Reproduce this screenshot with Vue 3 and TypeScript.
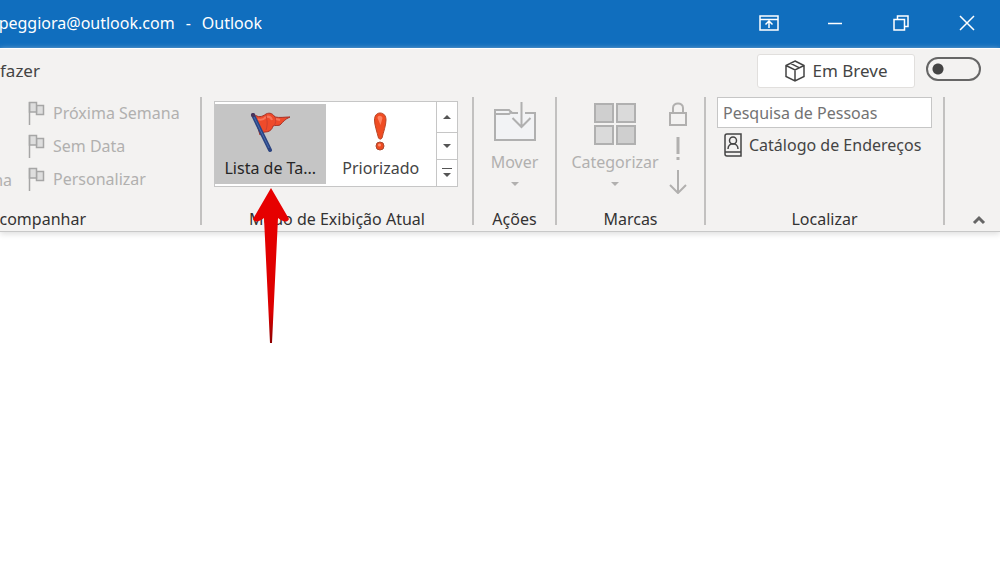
<script setup lang="ts">
import { ref } from 'vue'

interface FollowUp {
  label: string
}

const followUps: FollowUp[] = [
  { label: 'Próxima Semana' },
  { label: 'Sem Data' },
  { label: 'Personalizar' },
]

const people = ref<string>('')
const comingSoon = ref<boolean>(false)
const view = ref<'list' | 'priority'>('list')
</script>

<template>
  <div class="window">
    <header class="titlebar">
      <div class="title"><span>peggiora@outlook.com</span><span>-</span><span>Outlook</span></div>
      <div class="controls">
        <button type="button" aria-label="Opções da faixa">
          <svg width="20" height="16" viewBox="0 0 20 16"><path d="M1 1h18v14H1zM1 4.500h18M10 13V6.500M6.500 9.500L10 6l3.500 3.500" /></svg>
        </button>
        <button type="button" aria-label="Minimizar">
          <svg width="16" height="16" viewBox="0 0 16 16"><path d="M1 8.500h14" /></svg>
        </button>
        <button type="button" aria-label="Restaurar">
          <svg width="16" height="16" viewBox="0 0 16 16"><path d="M1 4.500h10.500V15H1zM4.500 4.500V1H15v10.500h-3.500" /></svg>
        </button>
        <button type="button" aria-label="Fechar">
          <svg width="16" height="16" viewBox="0 0 16 16"><path d="M1 1l14 14M15 1L1 15" /></svg>
        </button>
      </div>
    </header>

    <div class="ribbon">
      <div class="tabs">
        <span class="tell">fazer</span>
        <button type="button" class="soon">
          <svg width="20" height="22" viewBox="0 0 20 22"><path d="M10 1l9 4.500v11L10 21l-9-4.500v-11zM1 5.500l9 4.500 9-4.500M10 10v11M5.500 3.300l9 4.500" /></svg>
          Em Breve
        </button>
        <input v-model="comingSoon" type="checkbox" class="switch" aria-label="Em Breve" />
      </div>

      <div class="groups">
        <section class="group follow">
          <div class="body">
            <div class="cut"><span>na</span></div>
            <ul class="flags">
              <li v-for="f in followUps" :key="f.label">
                <button type="button" disabled>
                  <svg width="17" height="24" viewBox="0 0 17 24">
                    <path d="M8.500 4.500h7v9h-7z" />
                    <path d="M1.500 1.500h7v9.500h-7z" />
                    <path d="M1.500 1v23" />
                  </svg>
                  {{ f.label }}
                </button>
              </li>
            </ul>
          </div>
          <h2>companhar</h2>
        </section>

        <section class="group views">
          <div class="body">
            <div class="gallery">
              <button type="button" class="view" :class="{ on: view === 'list' }" @click="view = 'list'">
                <svg width="44" height="44" viewBox="0 0 44 44">
                  <path d="M6 4C10 8 14 7 18 4c4-2 7 0 9 3 5 1 9 0 15 0-5 2-7 5-10 8-3 1-5 0-7 1-1 4-4 6-8 6-2 0-3 2-5 3z" fill="#ef4b2b" stroke="#a83328" stroke-width="1" />
                  <path d="M10 9c3 2 6 0 8-2 3-1 5 0 6 3M28 9l4 1" fill="none" stroke="#f8745a" stroke-width="2" />
                  <path d="M18 5c1 5 2 9 0 15M27 7c1 3 1 6-1 9" fill="none" stroke="#cc4030" stroke-width="1" />
                  <path d="M5 5l17 35" stroke="#2c4480" stroke-width="4" stroke-linecap="round" />
                  <path d="M6 7l15 31" stroke="#466bb0" stroke-width="1" />
                  <circle cx="5" cy="5" r="2" fill="#4b3359" />
                </svg>
                <span>Lista de Ta...</span>
              </button>
              <button type="button" class="view" :class="{ on: view === 'priority' }" @click="view = 'priority'">
                <svg width="44" height="44" viewBox="0 0 44 44">
                  <path d="M21 3c4 0 6 3 6 7 0 5-2.500 12-4 18-1 1.500-2.500 1.500-3.500 0-1.500-6-4-13-4-18 0-4 2-7 5.500-7z" fill="#f04c22" stroke="#b84628" />
                  <path d="M18.500 8c0-3 4-3 5 0l-2 7z" fill="#ff8261" />
                  <circle cx="21" cy="36" r="4" fill="#ee4a20" stroke="#a94a32" />
                  <circle cx="20.500" cy="35" r="1.500" fill="#ff9270" />
                </svg>
                <span>Priorizado</span>
              </button>
              <div class="scroll">
                <button type="button" aria-label="Acima"><svg width="10" height="10" viewBox="0 0 10 10"><path d="M1 7l4-4 4 4z" /></svg></button>
                <button type="button" aria-label="Abaixo"><svg width="10" height="10" viewBox="0 0 10 10"><path d="M1 3l4 4 4-4z" /></svg></button>
                <button type="button" aria-label="Mais"><svg width="10" height="10" viewBox="0 0 10 10"><path d="M0 0h10v1H0zM1 5l4 4 4-4z" /></svg></button>
              </div>
            </div>
          </div>
          <h2>Modo de Exibição Atual</h2>
          <svg class="pointer" width="40" height="156" viewBox="0 0 40 156">
            <defs>
              <linearGradient id="tail" x1="0" y1="0" x2="0" y2="1">
                <stop offset="0" stop-color="#e80000" />
                <stop offset="0.800" stop-color="#dc0000" />
                <stop offset="1" stop-color="#8c0000" />
              </linearGradient>
            </defs>
            <path d="M20 0l18 31c-2 4-6 3-11-1l-6 125h-2L13 30c-5 4-9 5-11 1z" fill="url(#tail)" />
          </svg>
        </section>

        <section class="group actions">
          <div class="body">
            <button type="button" class="big" disabled>
              <svg width="42" height="46" viewBox="0 0 42 46">
                <path d="M1 9h14l3 3h23v27H1z" fill="#f2f3f5" />
                <path d="M1 13h14l3-2.500" fill="none" />
                <path d="M24 12h7" stroke="#f2f3f5" stroke-width="3" />
                <path d="M27.500 1v25M18.500 17l9 9 9-9" fill="none" />
              </svg>
              <span>Mover</span>
              <svg width="8" height="6" viewBox="0 0 8 6" class="caret"><path d="M0 1h8L4 5z" /></svg>
            </button>
          </div>
          <h2>Ações</h2>
        </section>

        <section class="group marks">
          <div class="body">
            <button type="button" class="big" disabled>
              <svg width="42" height="46" viewBox="0 0 42 46">
                <path d="M1 3h18v18H1zM23 25h18v18H23z" fill="#cfcfcf" />
                <path d="M23 3h18v18H23zM1 25h18v18H1z" fill="#dadada" />
              </svg>
              <span>Categorizar</span>
              <svg width="8" height="6" viewBox="0 0 8 6" class="caret"><path d="M0 1h8L4 5z" /></svg>
            </button>
            <div class="tools">
              <button type="button" disabled aria-label="Particular"><svg width="18" height="24" viewBox="0 0 18 24"><path d="M1 11h16v12H1zM4 11V6c0-6 10-6 10 0v5" /></svg></button>
              <button type="button" disabled aria-label="Alta Prioridade"><svg width="18" height="24" viewBox="0 0 18 24"><path d="M9 1v17M9 21v3" stroke-width="3" /></svg></button>
              <button type="button" disabled aria-label="Baixa Prioridade"><svg width="18" height="24" viewBox="0 0 18 24"><path d="M9 0v23M1 15l8 8 8-8" /></svg></button>
            </div>
          </div>
          <h2>Marcas</h2>
        </section>

        <section class="group find">
          <div class="body">
            <input v-model="people" type="text" placeholder="Pesquisa de Pessoas" aria-label="Pesquisa de Pessoas" />
            <button type="button" class="book">
              <svg width="18" height="24" viewBox="0 0 18 24"><path d="M3 1h14v22H3c-1 0-2-1-2-2V3c0-1 1-2 2-2zM1 19h16M4 16c0-7 10-7 10 0" /><circle cx="9" cy="7.500" r="3.500" /></svg>
              Catálogo de Endereços
            </button>
          </div>
          <h2>Localizar</h2>
        </section>

        <button type="button" class="collapse" aria-label="Recolher">
          <svg width="14" height="10" viewBox="0 0 14 10"><path d="M2 8l5-5 5 5" /></svg>
        </button>
      </div>
    </div>
    <main></main>
  </div>
</template>

<style>
body {
  margin: 0;
  background: #fff;
}
</style>

<style scoped>
.window {
  min-height: 100vh;
  font-family: "Noto Sans", "Open Sans", sans-serif;
  font-size: 16px;
  line-height: 24px;
  color: #444;
}
button {
  font: inherit;
  color: inherit;
  background: none;
  border: 0;
  padding: 0;
  display: flex;
  align-items: center;
}
svg {
  flex: none;
  display: block;
}
.titlebar {
  display: flex;
  justify-content: space-between;
  align-items: center;
  height: 48px;
  background: #106ebe;
  color: #fff;
}
.title {
  width: 262px;
  display: flex;
  justify-content: flex-end;
  gap: 11px;
  overflow: hidden;
  white-space: nowrap;
  padding-bottom: 2px;
}
.controls {
  display: flex;
  padding-bottom: 2px;
}
.controls button {
  width: 66px;
  height: 46px;
  justify-content: center;
}
.controls svg {
  fill: none;
  stroke: #fff;
  stroke-width: 1.5;
}
.ribbon {
  background: #f3f2f1;
  border-top: 1px solid #fff;
  border-bottom: 1px solid #c8c8c8;
  box-shadow: 0 2px 6px #ddd;
}
.tabs {
  display: flex;
  align-items: center;
  height: 44px;
  padding-right: 19px;
}
.tell {
  flex: 1;
  font-size: 17px;
}
.soon {
  width: 158px;
  height: 34px;
  box-sizing: border-box;
  justify-content: center;
  gap: 8px;
  font-size: 17px;
  background: #fff;
  border: 1px solid #e1dfdd;
  border-radius: 3px;
}
.soon svg {
  fill: none;
  stroke: #444;
  stroke-width: 1.5;
}
.switch {
  appearance: none;
  width: 55px;
  height: 24px;
  margin: 0 0 4px 11px;
  border: 2px solid #666;
  border-radius: 12px;
  background: radial-gradient(circle at 10px 10px, #444 5px, transparent 6px);
}
.groups {
  display: flex;
  height: 138px;
  box-sizing: border-box;
  padding: 4px 0 6px;
}
.group {
  position: relative;
  display: flex;
  flex-direction: column;
  justify-content: space-between;
  flex: none;
  box-sizing: border-box;
  border-right: 2px solid #c2c1c0;
}
.body {
  display: flex;
}
h2 {
  margin: 0;
  font-size: 16px;
  line-height: 12px;
  font-weight: 400;
  color: #333;
  text-align: center;
}
.follow {
  width: 202px;
}
.follow h2 {
  width: 86px;
  display: flex;
  justify-content: flex-end;
}
.cut {
  width: 12px;
  height: 95px;
  overflow: hidden;
  display: flex;
  justify-content: flex-end;
  align-items: flex-end;
  color: #b1b0af;
}
.flags {
  list-style: none;
  margin: 0;
  padding: 0 0 0 16px;
}
.flags button {
  height: 33px;
  box-sizing: border-box;
  padding-bottom: 2px;
  gap: 8px;
  color: #b1b0af;
  white-space: nowrap;
}
.flags svg {
  fill: #dedede;
  stroke: #a6a6a6;
  stroke-width: 1.5;
}
.views {
  width: 272px;
}
.views .body {
  padding: 4px 14px 0 12px;
}
.gallery {
  flex: 1;
  display: flex;
  height: 86px;
  box-sizing: border-box;
  border: 1px solid #c6c6c6;
  background: #fff;
}
.view {
  flex: 1;
  margin: 2px 0;
  flex-direction: column;
  padding-top: 6px;
  white-space: nowrap;
}
.view span {
  line-height: 28px;
}
.on {
  background: #c5c5c5;
  color: #262626;
}
.scroll {
  width: 20px;
  display: grid;
  grid-template-rows: 30px 27px 1fr;
  border-left: 1px solid #c6c6c6;
}
.scroll button {
  justify-content: center;
}
.scroll button + button {
  border-top: 1px solid #c6c6c6;
}
.scroll svg {
  fill: #555;
}
.pointer {
  position: absolute;
  left: 49px;
  top: 91px;
}
.actions {
  width: 83px;
}
.big {
  flex: 1;
  flex-direction: column;
  color: #b1b0af;
  padding-top: 4px;
}
.big svg {
  stroke: #b0b0b0;
  stroke-width: 2;
}
.big span {
  line-height: 30px;
}
.big .caret {
  fill: #b1b0af;
  stroke: none;
  margin-top: 4px;
}
.marks {
  width: 149px;
}
.marks .big {
  flex: none;
  width: 116px;
}
.tools {
  margin-left: -4px;
}
.tools button {
  height: 34px;
}
.tools svg {
  fill: none;
  stroke: #b1b0af;
  stroke-width: 2;
}
.find {
  width: 239px;
}
.find .body {
  flex-direction: column;
  padding: 0 11px;
}
.find input {
  height: 31px;
  box-sizing: border-box;
  font: inherit;
  padding: 0 5px;
  border: 1px solid #c6c6c6;
  background: #fff;
}
.find input::placeholder {
  color: #737373;
  opacity: 1;
}
.book {
  gap: 7px;
  height: 34px;
  padding-left: 7px;
  white-space: nowrap;
}
.book svg {
  fill: none;
  stroke: #444;
  stroke-width: 1.5;
}
.collapse {
  margin-left: auto;
  align-items: flex-end;
  padding: 0 14px 0 0;
}
.collapse svg {
  fill: none;
  stroke: #666;
  stroke-width: 3;
}
</style>
